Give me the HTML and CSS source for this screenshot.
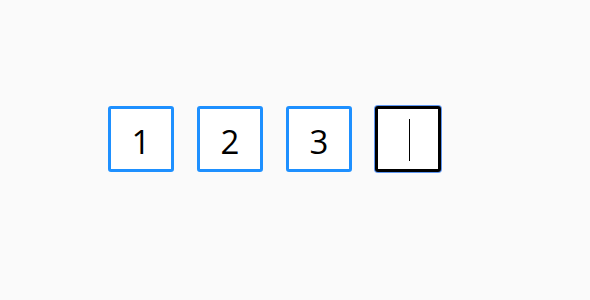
FILE: index.html
```html
<!DOCTYPE html>
<html>
<head>
    <title>Code input</title>
    <meta charset="utf-8">
    <link rel="stylesheet" href="styles.css">
</head>
<body>
    <div class="code-wrap">
        <div class="digit">1</div>
        <div class="digit">2</div>
        <div class="digit">3</div>
        <div class="digit active"><span class="caret"></span></div>
    </div>
</body>
</html>
```
FILE: styles.css
```css
* {
    margin: 0;
    padding: 0;
}

html,
body {
    height: 100%;
}

body {
    background: #fafafa;
    font-family: "Open Sans", sans-serif;
}

.code-wrap {
    display: flex;
    gap: 23px;
    padding: 106px 0 0 108px;
}

.digit {
    width: 60px;
    height: 57px;
    padding-top: 3px;
    border: 3px solid #1e90ff;
    border-radius: 3px;
    background: #fff;
    color: #000;
    font-size: 33px;
    line-height: 60px;
    text-align: center;
}

.digit.active {
    height: 60px;
    padding-top: 0;
    border-color: #000;
    box-shadow: 0 0 0 1px #5f97f2;
    display: flex;
    align-items: center;
    justify-content: center;
}

.caret {
    display: block;
    width: 1px;
    height: 42px;
    margin: 1px 0 0 2px;
    background: #000;
}
```
